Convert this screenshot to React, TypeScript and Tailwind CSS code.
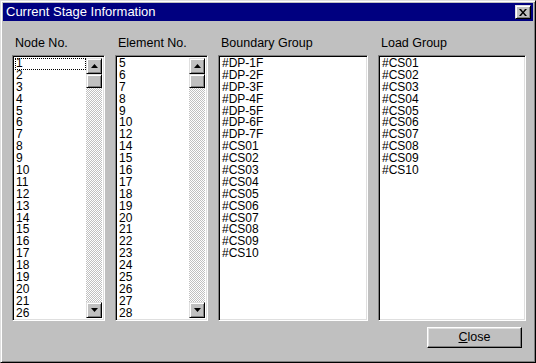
import React from "react";

const nodes = [..."123456789"].map(Number).concat([10, 11, 12, 13, 14, 15, 16, 17, 18, 19, 20, 21, 26]).map(String);
const elements = ["5", "6", "7", "8", "9", "10", "12", "14", "15", "16", "17", "18", "19", "20", "21", "22", "23", "24", "25", "26", "27", "28"];
const cs = ["#CS01", "#CS02", "#CS03", "#CS04", "#CS05", "#CS06", "#CS07", "#CS08", "#CS09", "#CS10"];
const boundary = ["#DP-1F", "#DP-2F", "#DP-3F", "#DP-4F", "#DP-5F", "#DP-6F", "#DP-7F", ...cs];

const raised =
  "bg-[#c0c0c0] border border-t-[#dfdfdf] border-l-[#dfdfdf] border-r-black border-b-black shadow-[inset_1px_1px_0_#fff,inset_-1px_-1px_0_#808080]";
const sunken =
  "bg-white border border-t-[#808080] border-l-[#808080] border-r-white border-b-white shadow-[inset_1px_1px_0_#000,inset_-1px_-1px_0_#dfdfdf]";

function Arrow({ up }: { up?: boolean }) {
  return (
    <div className={`${raised} w-4 h-4 flex items-center justify-center shrink-0`}>
      <svg width="7" height="4" viewBox="0 0 7 4">
        <path d={up ? "M3.5 0 L7 4 L0 4 Z" : "M0 0 L7 0 L3.5 4 Z"} fill="#000" />
      </svg>
    </div>
  );
}

function ListBox({ items, width, scroll, focus }: { items: string[]; width: string; scroll?: boolean; focus?: boolean }) {
  return (
    <div className={`${sunken} ${width} h-[266px] flex p-[2px] overflow-hidden`}>
      <div className="flex-1 flex flex-col overflow-hidden">
        {items.map((t, i) => (
          <div
            key={t + i}
            className={`h-[11.9px] leading-[11.9px] pl-[1px] shrink-0 ${
              focus && i === 0 ? "outline outline-1 outline-dotted outline-black -outline-offset-1" : ""
            }`}
          >
            {t}
          </div>
        ))}
      </div>
      {scroll && (
        <div className="w-4 flex flex-col bg-[repeating-conic-gradient(#c0c0c0_0_25%,#fff_0_50%)] bg-[length:2px_2px]">
          <Arrow up />
          <div className={`${raised} w-4 h-[14px]`} />
          <div className="flex-1" />
          <Arrow />
        </div>
      )}
    </div>
  );
}

function Column({ label, children }: { label: string; children: React.ReactNode }) {
  return (
    <div className="flex flex-col">
      <div className="h-[14px] leading-[14px] pl-[3px] mb-[5px] text-[12.5px]">{label}</div>
      {children}
    </div>
  );
}

export default function App() {
  return (
    <div
      className={`${raised} w-[536px] h-[363px] p-[2px] flex flex-col text-black text-[12px]`}
      style={{ fontFamily: '"Liberation Sans", Arial, sans-serif' }}
    >
      {/* Title bar */}
      <div className="h-[18px] bg-[#000080] flex items-center justify-between pl-[3px] pr-[2px] text-white text-[13px]">
        <span>Current Stage Information</span>
        <div className={`${raised} w-4 h-[14px] flex items-center justify-center`}>
          <svg width="8" height="7" viewBox="0 0 8 7">
            <path d="M0 0 L2 0 L4 2.5 L6 0 L8 0 L5 3.5 L8 7 L6 7 L4 4.5 L2 7 L0 7 L3 3.5 Z" fill="#000" />
          </svg>
        </div>
      </div>

      {/* Body */}
      <div className="flex gap-[10px] pl-[9px] pt-[15px]">
        <Column label="Node No.">
          <ListBox items={nodes} width="w-[93px]" scroll focus />
        </Column>
        <Column label="Element No.">
          <ListBox items={elements} width="w-[93px]" scroll />
        </Column>
        <Column label="Boundary Group">
          <ListBox items={boundary} width="w-[150px]" />
        </Column>
        <Column label="Load Group">
          <ListBox items={cs} width="w-[148px]" />
        </Column>
      </div>

      <div className="flex justify-end pr-[11px] pt-[6px]">
        <button
          className={`w-[95px] h-[21px] flex items-center justify-center text-[12.5px] border border-t-white border-l-white border-r-black border-b-black shadow-[inset_-1px_-1px_0_#808080,inset_1px_1px_0_#dfdfdf] bg-[#c0c0c0]`}
        >
          <span>
            <span className="underline">C</span>lose
          </span>
        </button>
      </div>
    </div>
  );
}
